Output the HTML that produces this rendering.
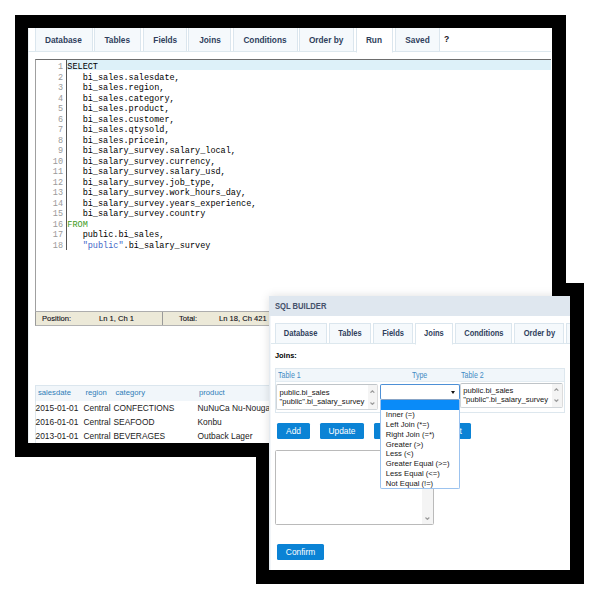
<!DOCTYPE html>
<html>
<head>
<meta charset="utf-8">
<title>SQL Builder</title>
<style>
*{box-sizing:border-box;margin:0;padding:0}
html,body{width:600px;height:600px;background:#fff;overflow:hidden}
body{position:relative;font-family:"Liberation Sans",sans-serif;color:#222}
.abs{position:absolute}
/* black outline of the two windows (union) */
#blkA{left:15px;top:15px;width:551px;height:442px;background:#000}
#blkB{left:256px;top:283px;width:328px;height:301px;background:#000}
#winA{left:28px;top:28px;width:524px;height:415px;background:#fff;overflow:hidden}
#winB{left:270px;top:296px;width:300px;height:274px;background:#fff;overflow:hidden}

/* tabs */
.tab{position:absolute;background:#f5f9fc;border:1px solid #dbe6ee;font-weight:bold;font-size:9.2px;color:#2f3f5c;text-align:center;white-space:nowrap}
.tab span{display:inline-block;transform:scaleX(0.9);margin:0 -5px}
.tab.act{background:#fff;border-bottom-color:#fff}
#tabsA .tab{top:-1px;height:25px;line-height:24.5px}
#tabsA .tab.act{height:26px}
#tablineA{left:0;top:23px;width:523px;height:1px;background:#dde8ee}

/* editor */
#ed{left:7px;top:31px;width:516px;height:253px;border-top:1px solid #6d6d6d;border-left:1px solid #a0a0a0;border-bottom:1px solid #adadad;background:#fff}
#gut{left:0;top:0;width:31px;height:190px;border-right:1px solid #555;background:#fff}
#hl{left:31px;top:0;width:484px;height:10.4px;background:#ddf1f9}
#lines{position:absolute;left:0;top:0;width:1032px;height:500px;transform:scale(0.5);transform-origin:0 0}
.ln{position:absolute;left:0;width:54px;text-align:right;font-family:"Liberation Mono",monospace;font-size:17.04px;color:#9a9a9a;height:21px;line-height:21px}
.cl{position:absolute;left:62.6px;font-family:"Liberation Mono",monospace;font-size:17.04px;color:#000;height:21px;line-height:21px;white-space:pre}
.kw{color:#3a9a20}
.st{color:#4468c8}

/* status */
#status{left:7px;top:284px;width:516px;height:14px;background:#ece9d8;border-left:1px solid #9a9a9a;border-bottom:1px solid #b2b2b2;font-size:7.6px;color:#0c0c14;-webkit-text-stroke:0.1px #0c0c14}
#status span{position:absolute;top:0;line-height:13px;white-space:nowrap}
#ssep{left:126px;top:0;width:1px;height:13px;background:#9a9a9a}

/* grid */
#ghead{left:7px;top:357px;width:517px;border-left:1px solid #dbe6ee;height:16px;background:#f1f6fa;border-top:1px solid #dbe6ee}
#ghead span{position:absolute;top:0;line-height:14px;font-size:7.7px;color:#2f7db8;white-space:nowrap}
.gr{position:absolute;left:0;width:524px;height:14px;font-size:8.4px;color:#222;line-height:14px}
.gr span{position:absolute;top:0;white-space:nowrap}

/* window B */
#titleB{left:0;top:0;width:300px;height:20px;background:#dfe7ef}
#titleB span{position:absolute;left:4.6px;top:0;font-size:9.2px;font-weight:bold;color:#44516a;line-height:20.4px;white-space:nowrap;transform:scaleX(0.828);transform-origin:0 50%}
#tabsB .tab{top:27px;height:21px;line-height:19.5px;font-size:8.4px}
#tablineB{left:1px;top:47px;width:299px;height:1px;background:#dde8ee}
#lbl{left:5px;top:53.5px;font-size:7.4px;font-weight:bold;color:#000;line-height:12px}
#panel{left:4.8px;top:72px;width:289.8px;height:44.5px;border:1px solid #dde7ee;background:#fff}
#phead{left:0;top:0;width:287.8px;height:13px;background:#f1f6fa;border-bottom:1px solid #e3ecf2}
#phead span{position:absolute;top:-0.4px;line-height:13px;font-size:8.3px;color:#428bc4;white-space:nowrap;transform:scaleX(0.85);transform-origin:0 50%}
.lb{position:absolute;top:89px;height:25px;border:1px solid #d0d5d9;border-top-color:#bfc4c8;border-right-color:#dcdcdc;background:#fff;font-size:7.65px;color:#141414;overflow:hidden;border-radius:2px}
.lb div.t{position:absolute;left:2.5px;white-space:nowrap;line-height:10px}
.sb{position:absolute;right:0;top:0;width:9.5px;height:100%;background:#f4f4f4}
.btn{position:absolute;background:#0b83d5;color:#fff;font-size:8.4px;text-align:center;border-radius:1.5px;white-space:nowrap}
#sel{left:110.4px;top:88.3px;width:79.4px;height:15.8px;border:1px solid #4d90d6;border-bottom-color:#88a4c6;border-radius:2px;background:#fff}
#dd{left:110.4px;top:103.9px;width:79.4px;height:89.6px;border:1px solid #9cc3ef;border-top:none;border-radius:0 0 2px 2px;background:#fff;font-size:7.65px;color:#161616}
#dd .hi{position:absolute;left:0;top:0;width:77.4px;height:9.9px;background:#0a8bf8}
#dd .it{position:absolute;left:4.4px;white-space:nowrap;line-height:10px;height:10px}
#ta{left:5px;top:154px;width:159px;height:75px;border:1px solid #bababa;border-radius:1.5px;background:#fff;overflow:hidden}
.chev{position:absolute;left:2.4px;display:block}
.arr{position:absolute;width:0;height:0;border-left:2.5px solid transparent;border-right:2.5px solid transparent}
</style>
</head>
<body>
<div class="abs" id="blkA"></div>
<div class="abs" id="blkB"></div>

<div class="abs" id="winA">
  <div class="abs" style="left:0;top:0;width:1px;height:415px;background:#e9eff3"></div>
  <div class="abs" style="left:7px;top:357px;width:1px;height:58px;background:#dfe8ee"></div>
  <div id="tabsA">
    <div class="tab" style="left:7px;width:57.5px"><span>Database</span></div>
    <div class="tab" style="left:66px;width:47px"><span>Tables</span></div>
    <div class="tab" style="left:115px;width:44px"><span>Fields</span></div>
    <div class="tab" style="left:160.3px;width:43px"><span>Joins</span></div>
    <div class="tab" style="left:205px;width:64.5px"><span>Conditions</span></div>
    <div class="tab" style="left:271px;width:55px"><span>Order by</span></div>
    <div class="abs" id="tablineA"></div>
    <div class="tab act" style="left:328px;width:36.5px"><span>Run</span></div>
    <div class="tab" style="left:367px;width:44.5px"><span>Saved</span></div>
    <div class="abs" style="left:416px;top:0;font-size:8.6px;font-weight:bold;color:#15151c;line-height:23.6px">?</div>
  </div>

  <div class="abs" id="ed">
    <div class="abs" id="hl"></div>
    <div class="abs" id="gut"></div>
    <div id="lines">
      <div class="ln" style="top:2.6px">1</div><div class="cl" style="top:2.6px">SELECT</div>
      <div class="ln" style="top:23.6px">2</div><div class="cl" style="top:23.6px">   bi_sales.salesdate,</div>
      <div class="ln" style="top:44.6px">3</div><div class="cl" style="top:44.6px">   bi_sales.region,</div>
      <div class="ln" style="top:65.6px">4</div><div class="cl" style="top:65.6px">   bi_sales.category,</div>
      <div class="ln" style="top:86.6px">5</div><div class="cl" style="top:86.6px">   bi_sales.product,</div>
      <div class="ln" style="top:107.6px">6</div><div class="cl" style="top:107.6px">   bi_sales.customer,</div>
      <div class="ln" style="top:128.6px">7</div><div class="cl" style="top:128.6px">   bi_sales.qtysold,</div>
      <div class="ln" style="top:149.6px">8</div><div class="cl" style="top:149.6px">   bi_sales.pricein,</div>
      <div class="ln" style="top:170.6px">9</div><div class="cl" style="top:170.6px">   bi_salary_survey.salary_local,</div>
      <div class="ln" style="top:191.6px">10</div><div class="cl" style="top:191.6px">   bi_salary_survey.currency,</div>
      <div class="ln" style="top:212.6px">11</div><div class="cl" style="top:212.6px">   bi_salary_survey.salary_usd,</div>
      <div class="ln" style="top:233.6px">12</div><div class="cl" style="top:233.6px">   bi_salary_survey.job_type,</div>
      <div class="ln" style="top:254.6px">13</div><div class="cl" style="top:254.6px">   bi_salary_survey.work_hours_day,</div>
      <div class="ln" style="top:275.6px">14</div><div class="cl" style="top:275.6px">   bi_salary_survey.years_experience,</div>
      <div class="ln" style="top:296.6px">15</div><div class="cl" style="top:296.6px">   bi_salary_survey.country</div>
      <div class="ln" style="top:317.6px">16</div><div class="cl" style="top:317.6px"><span class="kw">FROM</span></div>
      <div class="ln" style="top:338.6px">17</div><div class="cl" style="top:338.6px">   public.bi_sales,</div>
      <div class="ln" style="top:359.6px">18</div><div class="cl" style="top:359.6px">   <span class="st">"public"</span>.bi_salary_survey</div>
    </div>
  </div>

  <div class="abs" id="status">
    <span style="left:6px">Position:</span>
    <span style="left:63px">Ln 1, Ch 1</span>
    <div class="abs" id="ssep"></div>
    <span style="left:143px">Total:</span>
    <span style="left:183px">Ln 18, Ch 421</span>
  </div>

  <div class="abs" id="ghead">
    <span style="left:2px">salesdate</span>
    <span style="left:49.5px">region</span>
    <span style="left:79.5px">category</span>
    <span style="left:163px">product</span>
  </div>
  <div class="gr" style="top:373px"><span style="left:7.5px">2015-01-01</span><span style="left:55.5px">Central</span><span style="left:85.5px">CONFECTIONS</span><span style="left:169.5px">NuNuCa Nu-Nougat-Creme</span></div>
  <div class="gr" style="top:387px"><span style="left:7.5px">2016-01-01</span><span style="left:55.5px">Central</span><span style="left:85.5px">SEAFOOD</span><span style="left:169.5px">Konbu</span></div>
  <div class="gr" style="top:401px"><span style="left:7.5px">2013-01-01</span><span style="left:55.5px">Central</span><span style="left:85.5px">BEVERAGES</span><span style="left:169.5px">Outback Lager</span></div>
  <div class="abs" style="left:241px;top:268px;width:320px;height:200px;background:#fff;box-shadow:0 0 9px rgba(0,0,0,0.13)"></div>
</div>


<div class="abs" style="left:269px;top:296px;width:1px;height:20px;background:#dfe7ef"></div>
<div class="abs" style="left:269px;top:316px;width:1px;height:254px;background:#e4eaf0"></div>
<div class="abs" id="winB">
  <div class="abs" id="titleB"><span>SQL BUILDER</span></div>
  <div class="abs" style="left:0;top:20px;width:1px;height:254px;background:#f3f6f9"></div>
  <div id="tabsB">
    <div class="tab" style="left:5px;width:52px"><span>Database</span></div>
    <div class="tab" style="left:59px;width:42px"><span>Tables</span></div>
    <div class="tab" style="left:103px;width:40px"><span>Fields</span></div>
    <div class="abs" id="tablineB"></div>
    <div class="tab act" style="left:145px;width:38px;height:22px"><span>Joins</span></div>
    <div class="tab" style="left:185px;width:57px"><span>Conditions</span></div>
    <div class="tab" style="left:244px;width:50px"><span>Order by</span></div>
    <div class="tab" style="left:296px;width:30px"></div>
  </div>
  <div class="abs" id="lbl">Joins:</div>

  <div class="abs" id="panel">
    <div class="abs" id="phead">
      <span style="left:2.4px">Table 1</span>
      <span style="left:136px">Type</span>
      <span style="left:185px">Table 2</span>
    </div>
  </div>
  <div class="lb" style="left:6px;top:88.4px;width:102px;height:25.2px">
    <div class="t" style="top:2.3px">public.bi_sales</div>
    <div class="t" style="top:12.1px">"public".bi_salary_survey</div>
    <div class="sb"><svg class="chev" style="top:4.5px" width="4.8" height="3.2" viewBox="0 0 6 4"><path d="M0.6 3.4L3 1l2.4 2.4" fill="none" stroke="#9c9c9c" stroke-width="1.5"/></svg><svg class="chev" style="top:16.6px" width="4.8" height="3.2" viewBox="0 0 6 4"><path d="M0.6 0.6L3 3l2.4-2.4" fill="none" stroke="#9c9c9c" stroke-width="1.5"/></svg></div>
  </div>
  <div class="lb" style="left:189.8px;top:87px;width:102.8px;height:25.2px">
    <div class="t" style="top:1.7px">public.bi_sales</div>
    <div class="t" style="top:11.1px">"public".bi_salary_survey</div>
    <div class="sb"><svg class="chev" style="top:3.9px" width="4.8" height="3.2" viewBox="0 0 6 4"><path d="M0.6 3.4L3 1l2.4 2.4" fill="none" stroke="#9c9c9c" stroke-width="1.5"/></svg><svg class="chev" style="top:15.4px" width="4.8" height="3.2" viewBox="0 0 6 4"><path d="M0.6 0.6L3 3l2.4-2.4" fill="none" stroke="#9c9c9c" stroke-width="1.5"/></svg></div>
  </div>

  <div class="btn" style="left:7px;top:127.4px;width:33px;height:16px;line-height:16px">Add</div>
  <div class="btn" style="left:50px;top:127.4px;width:44px;height:16px;line-height:16px">Update</div>
  <div class="btn" style="left:104px;top:127.4px;width:44px;height:16px;line-height:16px">Delete</div>
  <div class="btn" style="left:157px;top:127.4px;width:44px;height:16px;line-height:16px;text-align:right;padding-right:9.2px">Reset</div>

  <div class="abs" id="ta"><div class="sb" style="width:10.6px"><svg class="chev" style="bottom:4px" width="4.8" height="3.2" viewBox="0 0 6 4"><path d="M0.6 0.6L3 3l2.4-2.4" fill="none" stroke="#9c9c9c" stroke-width="1.5"/></svg></div></div>

  <div class="abs" id="sel"><div class="arr" style="left:69.5px;top:5.9px;border-left-width:2.2px;border-right-width:2.2px;border-top:3.6px solid #111"></div></div>
  <div class="abs" id="dd">
    <div class="hi"></div>
    <div class="it" style="top:10.40px">Inner (=)</div>
    <div class="it" style="top:20.17px">Left Join (*=)</div>
    <div class="it" style="top:29.94px">Right Join (=*)</div>
    <div class="it" style="top:39.71px">Greater (&gt;)</div>
    <div class="it" style="top:49.48px">Less (&lt;)</div>
    <div class="it" style="top:59.25px">Greater Equal (&gt;=)</div>
    <div class="it" style="top:69.02px">Less Equal (&lt;=)</div>
    <div class="it" style="top:78.79px">Not Equal (!=)</div>
  </div>

  <div class="btn" style="left:7px;top:248.4px;width:47px;height:16px;line-height:16px">Confirm</div>
</div>

</body>
</html>
